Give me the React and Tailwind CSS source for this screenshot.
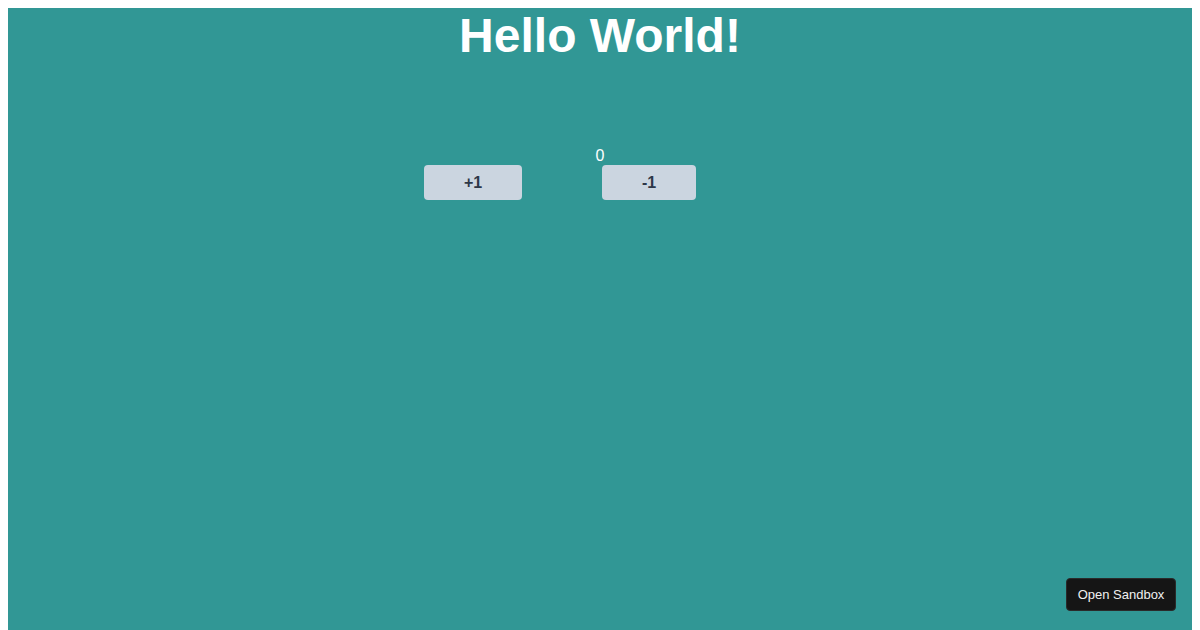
export default function App() {
  return (
    <div className="bg-white p-2 pb-0" style={{ fontFamily: '"Liberation Sans", Arial, sans-serif' }}>
      <div className="relative h-[622px] bg-[#319795]">
        <h1 className="text-center text-[48px] font-bold leading-[normal] text-white">Hello World!</h1>
        <div className="mt-[84px] flex flex-col items-center">
          <div className="text-[16px] leading-[18px] text-white">0</div>
          <div className="flex gap-20 pr-[80px]">
            <button className="h-[35px] w-[98px] rounded bg-[#cbd5e0] text-[16px] font-bold text-[#2d3748]">+1</button>
            <button className="h-[35px] w-[94px] rounded bg-[#cbd5e0] text-[16px] font-bold text-[#2d3748]">-1</button>
          </div>
        </div>
        <button className="absolute right-4 top-[570px] h-[33px] w-[110px] rounded border border-[#2a2a2a] bg-[#151515] text-[13px] text-[#f0f0f0]">
          Open Sandbox
        </button>
      </div>
    </div>
  );
}
